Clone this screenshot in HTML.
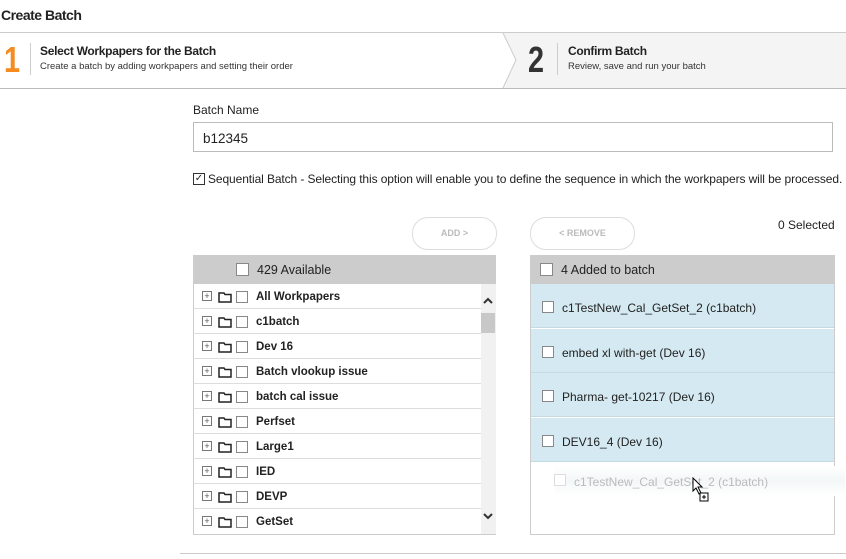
<!DOCTYPE html>
<html><head><style>
*{box-sizing:border-box;margin:0;padding:0}
body{width:846px;height:559px;background:#fff;font-family:"Liberation Sans",sans-serif;color:#222;position:relative;overflow:hidden}
.a{position:absolute}
.cb{position:absolute;width:12px;height:12px;border:1px solid #888;background:#fff}
.lrow{position:absolute;left:193px;width:288px;height:25px;border-bottom:1px solid #ddd;font-size:11.5px;font-weight:bold}
.lrow .pl{position:absolute;left:9px;top:7px;width:10px;height:10px;border:1px solid #777;font-size:9px;line-height:8px;text-align:center;font-weight:normal;color:#555}
.lrow svg{position:absolute;left:25px;top:7px}
.lrow .cb{left:43px;top:7px}
.lrow span{position:absolute;left:63px;top:7px}
.rrow{position:absolute;left:531px;width:303px;height:44px;background:#d4e9f1;border-bottom:1px solid #c4dbe4;font-size:12px}
.rrow .cb{left:11px;top:17px}
.rrow span{position:absolute;left:31px;top:17px}
.num{font-size:36px;font-weight:bold;transform:scaleX(.8);transform-origin:left top}
</style></head><body>
<div class="a" style="left:1px;top:7px;font-size:14px;font-weight:bold;letter-spacing:-0.5px">Create Batch</div>
<div class="a" style="left:0;top:32px;width:846px;height:57px;border-top:1px solid #ccc;border-bottom:1px solid #bbb;background:#fff"></div>
<svg class="a" style="left:0;top:32px" width="846" height="57"><polygon points="503,1 846,1 846,56 503,56 516,28" fill="#f4f4f5"/><polyline points="503,1 516,28 503,56" fill="none" stroke="#ccc"/></svg>
<div class="a num" style="left:4px;top:39px;color:#f68b1f">1</div>
<div class="a" style="left:30px;top:43px;width:1px;height:32px;background:#ccc"></div>
<div class="a" style="left:40px;top:44px;font-size:12px;font-weight:bold;letter-spacing:-0.3px">Select Workpapers for the Batch</div>
<div class="a" style="left:40px;top:61px;font-size:9.5px;color:#333">Create a batch by adding workpapers and setting their order</div>
<div class="a num" style="left:528px;top:39px;color:#333">2</div>
<div class="a" style="left:557px;top:43px;width:1px;height:32px;background:#ccc"></div>
<div class="a" style="left:568px;top:44px;font-size:12px;font-weight:bold;letter-spacing:-0.3px">Confirm Batch</div>
<div class="a" style="left:568px;top:61px;font-size:9.5px;color:#333">Review, save and run your batch</div>

<div class="a" style="left:193px;top:103px;font-size:12px">Batch Name</div>
<div class="a" style="left:193px;top:122px;width:640px;height:30px;border:1px solid #bbb;font-size:13.5px;padding:8px 0 0 9px">b12345</div>
<div class="cb" style="left:193px;top:173px;border-color:#333;font-size:10px;line-height:10px;text-align:center">✓</div>
<div class="a" style="left:208px;top:172px;font-size:12px;letter-spacing:-0.1px">Sequential Batch - Selecting this option will enable you to define the sequence in which the workpapers will be processed.</div>

<div class="a" style="left:412px;top:217px;width:85px;height:33px;border:1px solid #ddd;border-radius:16px;font-size:9px;color:#bbb;text-align:center;line-height:31px;font-weight:bold">ADD &gt;</div>
<div class="a" style="left:530px;top:217px;width:105px;height:33px;border:1px solid #ddd;border-radius:16px;font-size:9px;color:#bbb;text-align:center;line-height:31px;font-weight:bold">&lt; REMOVE</div>
<div class="a" style="left:778px;top:218px;font-size:12px">0 Selected</div>

<div class="a" style="left:193px;top:255px;width:303px;height:280px;border:1px solid #ccc"></div>
<div class="a" style="left:193px;top:255px;width:303px;height:29px;background:#ccc"></div>
<div class="cb" style="left:236px;top:263px;width:13px;height:13px"></div>
<div class="a" style="left:257px;top:263px;font-size:12.5px">429 Available</div>
<div class="lrow" style="top:284px"><div class="pl">+</div><svg width="14" height="12"><path d="M1,2h5l1,1.5h6v7.5h-12z" fill="#fff" stroke="#222" stroke-width="1.5"/></svg><div class="cb"></div><span>All Workpapers</span></div>
<div class="lrow" style="top:309px"><div class="pl">+</div><svg width="14" height="12"><path d="M1,2h5l1,1.5h6v7.5h-12z" fill="#fff" stroke="#222" stroke-width="1.5"/></svg><div class="cb"></div><span>c1batch</span></div>
<div class="lrow" style="top:334px"><div class="pl">+</div><svg width="14" height="12"><path d="M1,2h5l1,1.5h6v7.5h-12z" fill="#fff" stroke="#222" stroke-width="1.5"/></svg><div class="cb"></div><span>Dev 16</span></div>
<div class="lrow" style="top:359px"><div class="pl">+</div><svg width="14" height="12"><path d="M1,2h5l1,1.5h6v7.5h-12z" fill="#fff" stroke="#222" stroke-width="1.5"/></svg><div class="cb"></div><span>Batch vlookup issue</span></div>
<div class="lrow" style="top:384px"><div class="pl">+</div><svg width="14" height="12"><path d="M1,2h5l1,1.5h6v7.5h-12z" fill="#fff" stroke="#222" stroke-width="1.5"/></svg><div class="cb"></div><span>batch cal issue</span></div>
<div class="lrow" style="top:409px"><div class="pl">+</div><svg width="14" height="12"><path d="M1,2h5l1,1.5h6v7.5h-12z" fill="#fff" stroke="#222" stroke-width="1.5"/></svg><div class="cb"></div><span>Perfset</span></div>
<div class="lrow" style="top:434px"><div class="pl">+</div><svg width="14" height="12"><path d="M1,2h5l1,1.5h6v7.5h-12z" fill="#fff" stroke="#222" stroke-width="1.5"/></svg><div class="cb"></div><span>Large1</span></div>
<div class="lrow" style="top:459px"><div class="pl">+</div><svg width="14" height="12"><path d="M1,2h5l1,1.5h6v7.5h-12z" fill="#fff" stroke="#222" stroke-width="1.5"/></svg><div class="cb"></div><span>IED</span></div>
<div class="lrow" style="top:484px"><div class="pl">+</div><svg width="14" height="12"><path d="M1,2h5l1,1.5h6v7.5h-12z" fill="#fff" stroke="#222" stroke-width="1.5"/></svg><div class="cb"></div><span>DEVP</span></div>
<div class="lrow" style="top:509px;border:none"><div class="pl">+</div><svg width="14" height="12"><path d="M1,2h5l1,1.5h6v7.5h-12z" fill="#fff" stroke="#222" stroke-width="1.5"/></svg><div class="cb"></div><span>GetSet</span></div>
<div class="a" style="left:481px;top:284px;width:15px;height:250px;background:#f1f1f1"></div>
<div class="a" style="left:481px;top:313px;width:14px;height:20px;background:#c8c8c8"></div>
<svg class="a" style="left:482px;top:296px" width="12" height="10"><path d="M2,7 L6,3 L10,7" fill="none" stroke="#333" stroke-width="2"/></svg>
<svg class="a" style="left:482px;top:511px" width="12" height="10"><path d="M2,3 L6,7 L10,3" fill="none" stroke="#333" stroke-width="2"/></svg>

<div class="a" style="left:530px;top:255px;width:305px;height:280px;border:1px solid #ccc"></div>
<div class="a" style="left:530px;top:255px;width:305px;height:29px;background:#ccc"></div>
<div class="cb" style="left:540px;top:263px;width:13px;height:13px"></div>
<div class="a" style="left:561px;top:263px;font-size:12.5px">4 Added to batch</div>
<div class="rrow" style="top:284px"><div class="cb"></div><span>c1TestNew_Cal_GetSet_2 (c1batch)</span></div>
<div class="rrow" style="top:329px"><div class="cb"></div><span>embed xl with-get (Dev 16)</span></div>
<div class="rrow" style="top:373px"><div class="cb"></div><span>Pharma- get-10217 (Dev 16)</span></div>
<div class="rrow" style="top:418px"><div class="cb"></div><span>DEV16_4 (Dev 16)</span></div>
<div class="a" style="left:555px;top:466px;width:290px;height:30px;background:linear-gradient(#fff,#f3f7f8,#fff)"></div>
<div class="cb" style="left:554px;top:474px;border-color:#ddd"></div>
<div class="a" style="left:574px;top:475px;font-size:12px;color:#bbb">c1TestNew_Cal_GetSet_2 (c1batch)</div>
<svg class="a" style="left:692px;top:477px" width="20" height="26"><path d="M1,1 L1,14 L4,11 L7,17 L9,16 L6,10 L10,10 Z" fill="#fff" stroke="#000"/><rect x="8" y="16" width="8" height="8" fill="#fff" stroke="#000"/><path d="M10,20h4M12,18v4" stroke="#000"/></svg>
<div class="a" style="left:180px;top:553px;width:666px;height:1px;background:#ccc"></div>
</body></html>
